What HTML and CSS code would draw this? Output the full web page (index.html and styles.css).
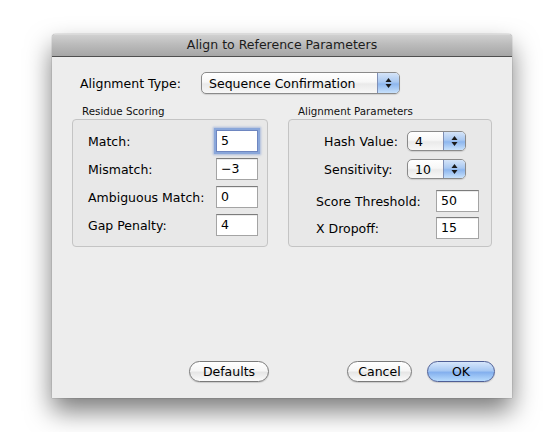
FILE: index.html
```html
<!DOCTYPE html>
<html>
<head>
<meta charset="utf-8">
<title>Align to Reference Parameters</title>
<link rel="stylesheet" href="styles.css">
</head>
<body>
<div class="desk">
  <div class="window">
    <div class="titlebar">Align to Reference Parameters</div>
    <div class="content">
      <div class="type-row">
        <span class="type-label">Alignment Type:</span>
        <div class="popup popup-wide">
          <span class="popup-text">Sequence Confirmation</span>
          <span class="popup-arrows"><svg width="7" height="12" viewBox="0 0 7 12"><polygon points="0.5,5 3.5,1 6.5,5" fill="#1a1a1a"/><polygon points="0.5,7 3.5,11 6.5,7" fill="#1a1a1a"/></svg></span>
        </div>
      </div>
      <div class="groups">
        <div class="group group-left">
          <div class="group-title">Residue Scoring</div>
          <div class="group-box">
            <div class="form-grid scoring">
              <span class="lbl">Match:</span><span class="field focused">5</span>
              <span class="lbl">Mismatch:</span><span class="field">−3</span>
              <span class="lbl">Ambiguous Match:</span><span class="field">0</span>
              <span class="lbl">Gap Penalty:</span><span class="field">4</span>
            </div>
          </div>
        </div>
        <div class="group group-right">
          <div class="group-title">Alignment Parameters</div>
          <div class="group-box">
            <div class="form-grid popups">
              <span class="lbl">Hash Value:</span>
              <div class="popup popup-small"><span class="popup-text">4</span><span class="popup-arrows"><svg width="7" height="12" viewBox="0 0 7 12"><polygon points="0.5,5 3.5,1 6.5,5" fill="#1a1a1a"/><polygon points="0.5,7 3.5,11 6.5,7" fill="#1a1a1a"/></svg></span></div>
              <span class="lbl">Sensitivity:</span>
              <div class="popup popup-small"><span class="popup-text">10</span><span class="popup-arrows"><svg width="7" height="12" viewBox="0 0 7 12"><polygon points="0.5,5 3.5,1 6.5,5" fill="#1a1a1a"/><polygon points="0.5,7 3.5,11 6.5,7" fill="#1a1a1a"/></svg></span></div>
            </div>
            <div class="form-grid thresholds">
              <span class="lbl">Score Threshold:</span><span class="field">50</span>
              <span class="lbl">X Dropoff:</span><span class="field">15</span>
            </div>
          </div>
        </div>
      </div>
      <div class="buttons">
        <span class="btn btn-defaults">Defaults</span>
        <span class="btn btn-cancel">Cancel</span>
        <span class="btn btn-ok">OK</span>
      </div>
    </div>
  </div>
</div>
</body>
</html>
```

FILE: styles.css
```css
html, body {
  margin: 0;
  padding: 0;
  background: #ffffff;
}
body {
  font-family: "DejaVu Sans", "Liberation Sans", sans-serif;
  font-size: 12.5px;
  color: #000;
}
.desk {
  padding: 34px 0 0 52px;
  width: 547px;
  height: 432px;
  box-sizing: border-box;
  overflow: hidden;
}
.window {
  width: 460px;
  height: 364px;
  display: flex;
  flex-direction: column;
  background: #ededed;
  border-radius: 4px 4px 0 0;
  box-shadow: 0 13px 26px rgba(0, 0, 0, 0.52), 0 0 1px 0 rgba(0, 0, 0, 0.7);
}
.titlebar {
  height: 22px;
  line-height: 22px;
  text-align: center;
  border-radius: 4px 4px 0 0;
  background: linear-gradient(#e4e4e4 0, #d0d0d0 1px, #bababa 50%, #a6a6a6 100%);
  border-bottom: 1px solid #4f4f4f;
  color: #1c1c1c;
}
.content {
  flex: 1;
  display: flex;
  flex-direction: column;
}
.type-row {
  display: flex;
  align-items: center;
  margin-top: 15px;
  padding-left: 28px;
  height: 22px;
}
.type-label {
  width: 121px;
}
.popup {
  display: flex;
  align-items: center;
  box-sizing: border-box;
  border: 1px solid #8a8a8a;
  border-radius: 5px;
  background: linear-gradient(#ffffff 0%, #f7f7f7 45%, #eaeaea 55%, #f7f7f7 100%);
  box-shadow: 0 1px 1px rgba(0, 0, 0, 0.12);
  overflow: hidden;
}
.popup-wide {
  width: 199px;
  height: 22px;
}
.popup-small {
  width: 59px;
  height: 20px;
}
.popup-text {
  flex: 1;
  padding-left: 7px;
  white-space: nowrap;
}
.popup-arrows {
  width: 21px;
  align-self: stretch;
  display: flex;
  align-items: center;
  justify-content: center;
  border-left: 1px solid #7f8fb5;
  background: linear-gradient(#d5e4f8 0%, #a9c8f1 45%, #8db6ee 55%, #c8e1fb 100%);
}
.popup-arrows svg {
  display: block;
}
.groups {
  display: flex;
  gap: 20px;
  padding: 0 20px;
  margin-top: 11px;
}
.group-left {
  width: 196px;
}
.group-right {
  width: 204px;
}
.group-title {
  font-size: 10.3px;
  line-height: 12px;
  height: 12px;
  padding-left: 10px;
  margin-bottom: 2px;
  color: #111;
}
.group-box {
  box-sizing: border-box;
  height: 128px;
  border: 1px solid #c4c4c4;
  border-radius: 4px;
  background: #e8e8e8;
}
.form-grid {
  display: grid;
  align-items: center;
}
.scoring {
  padding: 10px 0 0 15px;
  grid-template-columns: 128px 42px;
  grid-auto-rows: 22px;
  row-gap: 6px;
}
.popups {
  padding: 11px 0 0 35px;
  grid-template-columns: 83px 59px;
  grid-auto-rows: 20px;
  row-gap: 8px;
}
.thresholds {
  padding: 11px 0 0 27px;
  grid-template-columns: 120px 43px;
  grid-auto-rows: 22px;
  row-gap: 5px;
}
.lbl {
  white-space: nowrap;
}
.field {
  box-sizing: border-box;
  height: 22px;
  line-height: 20px;
  padding-left: 4px;
  background: #ffffff;
  border: 1px solid #a4a4a4;
  border-top-color: #7c7c7c;
  box-shadow: inset 0 1px 0 rgba(0, 0, 0, 0.08);
}
.field.focused {
  box-shadow: 0 0 0 2px #8aa7da, 0 0 2px 3px rgba(120, 150, 210, 0.55);
  border-color: #6e86c0;
}
.buttons {
  margin-top: auto;
  margin-bottom: 16px;
  display: flex;
  padding: 0 17px 0 137px;
}
.btn {
  box-sizing: border-box;
  height: 21px;
  line-height: 19px;
  text-align: center;
  border: 1px solid #7a7a7a;
  border-radius: 11px;
  background: linear-gradient(#ffffff 0%, #f6f6f6 45%, #e6e6e6 55%, #fbfbfb 100%);
  box-shadow: 0 1px 1px rgba(0, 0, 0, 0.15);
}
.btn-defaults {
  width: 80px;
}
.btn-cancel {
  width: 65px;
  margin-left: auto;
}
.btn-ok {
  width: 68px;
  margin-left: 15px;
  border-color: #4f5f96;
  background: linear-gradient(#d6e6fb 0%, #a7c8f3 45%, #84b0ee 55%, #b7dbfd 100%);
}
```
